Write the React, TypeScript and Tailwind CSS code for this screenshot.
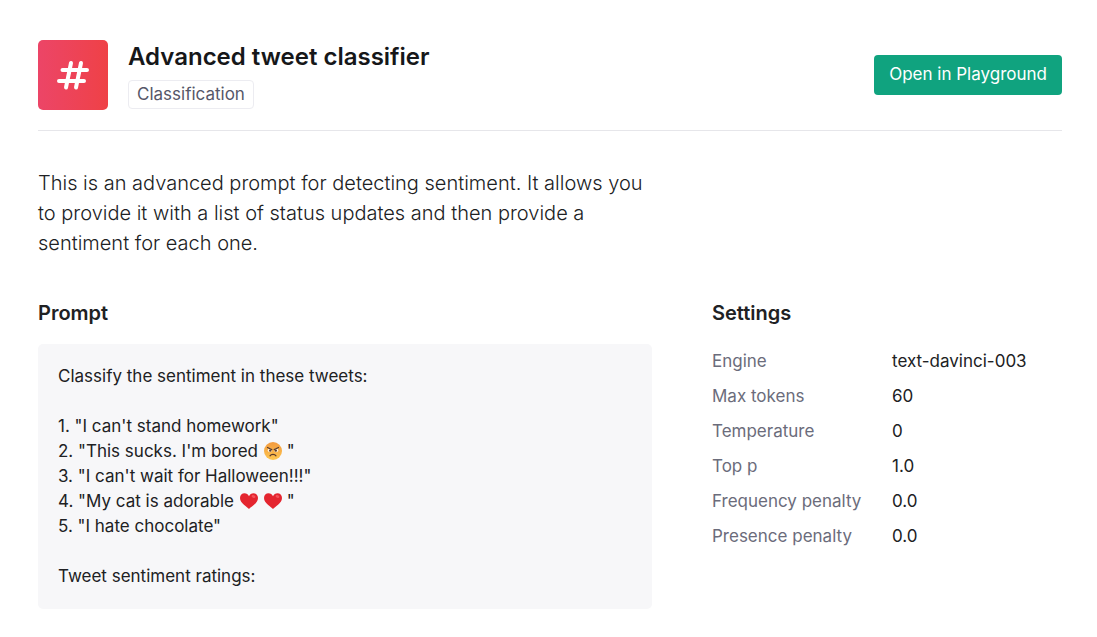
import React from 'react';

const promptLines: React.ReactNode[] = [
  'Classify the sentiment in these tweets:',
  '',
  '1. "I can\'t stand homework"',
  <>
    2. "This sucks. I'm bored <AngryFace />"
  </>,
  '3. "I can\'t wait for Halloween!!!"',
  <>
    4. "My cat is adorable <Heart />
    <Heart />"
  </>,
  '5. "I hate chocolate"',
  '',
  'Tweet sentiment ratings:',
];

const settings = [
  { label: 'Engine', value: 'text-davinci-003' },
  { label: 'Max tokens', value: '60' },
  { label: 'Temperature', value: '0' },
  { label: 'Top p', value: '1.0' },
  { label: 'Frequency penalty', value: '0.0' },
  { label: 'Presence penalty', value: '0.0' },
];

function AngryFace() {
  return (
    <svg
      viewBox="0 0 20 20"
      className="mr-1 inline-block h-5 w-5 align-text-bottom"
      role="img"
      aria-label="angry face"
    >
      <defs>
        <linearGradient id="angry-skin" x1="0" y1="0" x2="0" y2="1">
          <stop offset="0" stopColor="#f39a3f" />
          <stop offset="1" stopColor="#fdc650" />
        </linearGradient>
      </defs>
      <circle cx="10" cy="10" r="9" fill="url(#angry-skin)" />
      <circle cx="6.800" cy="9.300" r="2" fill="#fff3dc" />
      <circle cx="13.200" cy="9.300" r="2" fill="#fff3dc" />
      <path
        d="M4.500 6.500L8.800 8.600M15.500 6.500L11.200 8.600M7 14.800C8.200 13 11.800 13 13 14.800"
        fill="none"
        stroke="#5b3a2a"
        strokeWidth="1.2"
        strokeLinecap="round"
      />
      <circle cx="7.200" cy="9.600" r="1.200" fill="#5b3a2a" />
      <circle cx="12.800" cy="9.600" r="1.200" fill="#5b3a2a" />
    </svg>
  );
}

function Heart() {
  return (
    <svg
      viewBox="0 0 20 20"
      className="mr-1 inline-block h-5 w-5 align-text-bottom"
      role="img"
      aria-label="heart"
    >
      <path
        d="M10 18C8.500 16 1 12.500 1 7C1 4 3 2.200 5.500 2.200C7.500 2.200 9.200 3.200 10 5.200C10.800 3.200 12.500 2.200 14.500 2.200C17 2.200 19 4 19 7C19 12.500 11.500 16 10 18Z"
        fill="#e4252f"
      />
      <ellipse
        cx="14.500"
        cy="5.500"
        rx="2"
        ry="1.300"
        fill="#f4525a"
        transform="rotate(25 14.5 5.5)"
      />
    </svg>
  );
}

const App: React.FC = () => {
  return (
    <main className="min-h-screen bg-white pt-10 pr-[35px] pb-7 pl-[38px] font-['Inter',sans-serif] text-[#202123]">
      <header className="flex items-center justify-between border-b border-[#e6e6ea] pb-5">
        <div className="flex items-center gap-5">
          <div className="flex h-[70px] w-[70px] items-center justify-center rounded-[5px] bg-linear-to-r from-[#ec4567] to-[#ef4146]">
            <svg viewBox="0 0 32 32" className="h-8 w-8" aria-hidden="true">
              <path
                d="M14 4L9 28.500M24 4L19 28.500M5.500 11H30M2 22H27"
                fill="none"
                stroke="#fff"
                strokeWidth="4"
                strokeLinecap="round"
              />
            </svg>
          </div>
          <div>
            <h1 className="mb-[7px] text-2xl leading-8 font-semibold text-[#161719]">
              Advanced tweet classifier
            </h1>
            <span className="block w-fit rounded border border-[#ececf1] px-2 text-[17px] leading-[27px] text-[#565869]">
              Classification
            </span>
          </div>
        </div>
        <button className="h-10 rounded bg-[#10a37f] px-[15px] text-[17px] text-white">
          Open in Playground
        </button>
      </header>
      <p className="mt-[37px] max-w-[620px] text-xl leading-[30px] font-light">
        This is an advanced prompt for detecting sentiment. It allows you to
        provide it with a list of status updates and then provide a sentiment
        for each one.
      </p>
      <div className="mt-[39px] flex gap-[60px]">
        <section className="flex-1">
          <h2 className="mb-[15px] text-xl leading-8 font-semibold">Prompt</h2>
          <div className="rounded-[5px] bg-[#f7f7f9] p-5 text-[17px] leading-[25px]">
            {promptLines.map((line, index) => (
              <div key={index} className="min-h-[25px]">
                {line}
              </div>
            ))}
          </div>
        </section>
        <section className="w-[350px]">
          <h2 className="mb-[15px] text-xl leading-8 font-semibold">
            Settings
          </h2>
          <dl className="text-[17px]">
            {settings.map(({ label, value }) => (
              <div key={label} className="flex h-[35px] items-center">
                <dt className="w-[180px] text-[#6b6c7b]">{label}</dt>
                <dd>{value}</dd>
              </div>
            ))}
          </dl>
        </section>
      </div>
    </main>
  );
};

export default App;
